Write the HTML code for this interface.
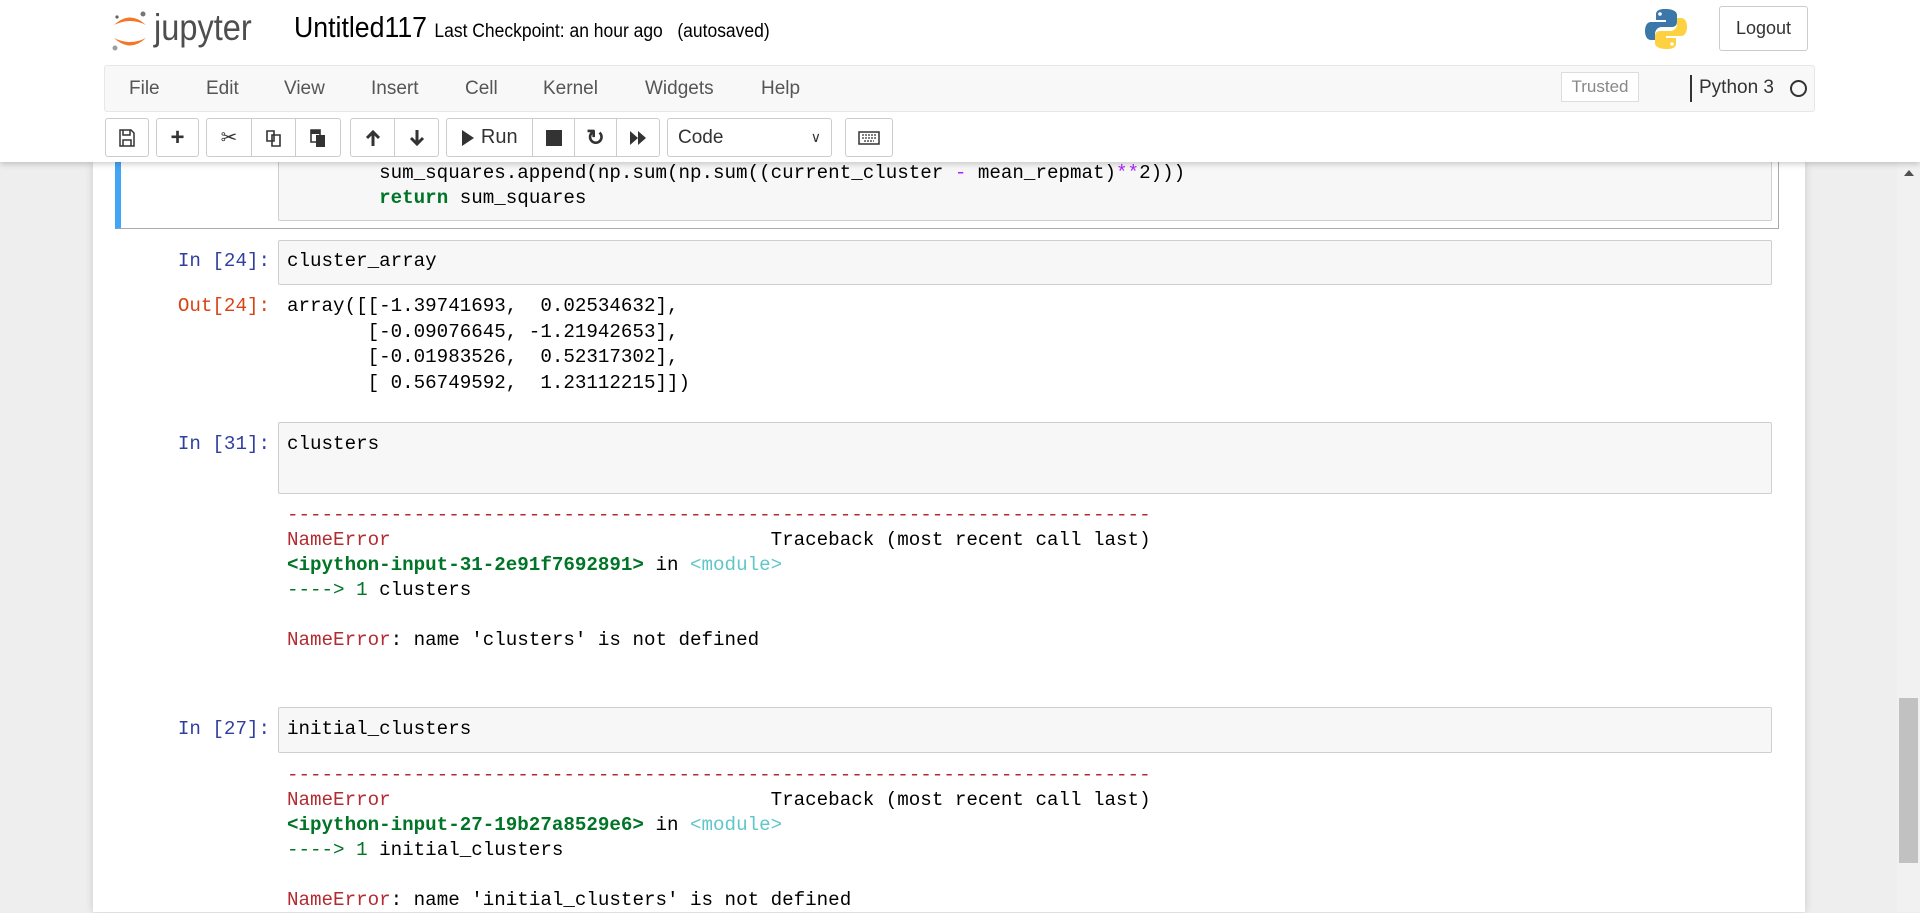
<!DOCTYPE html>
<html><head><meta charset="utf-8"><style>
*{box-sizing:border-box;margin:0;padding:0}
body{width:1920px;height:912px;overflow:hidden;background:#eeeeee;font-family:"Liberation Sans",sans-serif;position:relative}
.abs{position:absolute}
.mono{font-family:"Liberation Mono",monospace;font-size:19.2px;line-height:25px;white-space:pre;color:#000}
#hdr{left:0;top:0;width:1920px;height:162px;background:#fff;box-shadow:0 2px 6px rgba(0,0,0,.2);z-index:5}
.menu{left:104px;top:65px;width:1711px;height:47px;background:#f8f8f8;border:1px solid #e7e7e7;border-radius:3px}
.menu span{position:absolute;top:12px;font-size:19px;color:#555}
.btn{position:absolute;top:118px;height:39px;background:#fff;border:1px solid #ccc;border-radius:3px;display:flex;align-items:center;justify-content:center;color:#333;font-size:18px}
.grp{display:flex;position:absolute;top:118px;height:39px}
.grp div{border:1px solid #ccc;background:#fff;height:39px;display:flex;align-items:center;justify-content:center;margin-left:-1px;color:#333}
.grp div:first-child{border-radius:3px 0 0 3px;margin-left:0}
.grp div:last-child{border-radius:0 3px 3px 0}
.inbox{background:#f7f7f7;border:1px solid #cfcfcf;border-radius:2px}
.pin{color:#303f9f;text-align:right;width:180px}
.pout{color:#d84315;text-align:right;width:180px}
.r{color:#b22b31}.g{color:#007427;font-weight:bold}.c{color:#60c6c8}.gn{color:#007427}
</style></head><body>
<div class="abs" style="left:93px;top:162px;width:1712px;height:750px;background:#fff;box-shadow:0 0 8px rgba(0,0,0,.15)"></div>
<div id="hdr" class="abs">
 <svg class="abs" style="left:110px;top:8px" width="40" height="46" viewBox="0 0 40 46">
  <path d="M4 17 Q20 2 36 17 Q20 9 4 17Z" fill="#f37726"/>
  <path d="M4 30 Q20 45 36 30 Q20 38 4 30Z" fill="#f37726"/>
  <circle cx="33" cy="6" r="2.5" fill="#767677"/><circle cx="5" cy="40" r="2.5" fill="#9e9e9e"/><circle cx="7" cy="9" r="1.6" fill="#616262"/>
 </svg>
 <div class="abs" style="left:154px;top:7px;font-size:37px;color:#4e4e4e;letter-spacing:0;transform:scaleX(0.88);transform-origin:left">jupyter</div>
 <div class="abs" style="left:294px;top:12px;font-size:29px;color:#000;transform:scaleX(0.92);transform-origin:left">Untitled117 <span style="font-size:19px">Last Checkpoint: an hour ago &nbsp;&nbsp;(autosaved)</span></div>
 <svg class="abs" style="left:1645px;top:7px" width="42" height="44" viewBox="0 0 42 44">
  <path d="M20 2c-9 0-9 4-9 6v5h10v2H6c-4 0-6 4-6 9s2 9 6 9h4v-6c0-4 3-7 7-7h10c3 0 5-2 5-5V8c0-3-3-6-12-6z" fill="#3b77a8"/>
  <path d="M22 42c9 0 9-4 9-6v-5H21v-2h15c4 0 6-4 6-9s-2-9-6-9h-4v6c0 4-3 7-7 7H15c-3 0-5 2-5 5v7c0 3 3 6 12 6z" fill="#fed142"/>
  <circle cx="15" cy="7" r="1.8" fill="#fff"/><circle cx="27" cy="37" r="1.8" fill="#fff"/>
 </svg>
 <div class="abs" style="left:1719px;top:6px;width:89px;height:45px;border:1px solid #ccc;border-radius:3px;font-size:18px;color:#333;display:flex;align-items:center;justify-content:center">Logout</div>
 <div class="abs menu">
  <span style="left:24px">File</span><span style="left:101px">Edit</span><span style="left:179px">View</span><span style="left:266px">Insert</span><span style="left:360px">Cell</span><span style="left:438px">Kernel</span><span style="left:540px">Widgets</span><span style="left:656px">Help</span>
  <div class="abs" style="left:1456px;top:6px;width:78px;height:30px;border:1px solid #ddd;background:#fff;color:#888;font-size:17px;display:flex;align-items:center;justify-content:center">Trusted</div>
  <div class="abs" style="left:1585px;top:9px;width:2px;height:27px;background:#333"></div>
  <span style="left:1594px;top:11px;color:#333;font-size:19px">Python 3</span>
  <div class="abs" style="left:1685px;top:14px;width:17px;height:17px;border:2.5px solid #333;border-radius:50%"></div>
 </div>
 <div class="btn" style="left:105px;width:44px">
  <svg width="16" height="18" viewBox="0 0 16 18"><path d="M1 1h11l3 3v13H1z M4 1v5h7V1 M4 11h8v6H4z" fill="none" stroke="#333" stroke-width="1.5"/></svg></div>
 <div class="btn" style="left:156px;width:43px;font-weight:bold;font-size:24px">+</div>
 <div class="grp" style="left:206px"><div style="width:46px;font-size:20px">✂</div><div style="width:45px">
  <svg width="18" height="18" viewBox="0 0 18 18"><path d="M2 2h7v10H2z M7 6h8v11H7z" fill="#fff" stroke="#333" stroke-width="1.6"/></svg></div><div style="width:46px">
  <svg width="18" height="20" viewBox="0 0 18 20"><path d="M2 2h9v4H2z" fill="#333"/><path d="M2 2h9v12H2z" fill="none" stroke="#333" stroke-width="1.6"/><path d="M7 7h9v12H7z" fill="#333"/></svg></div></div>
 <div class="grp" style="left:350px"><div style="width:45px"><svg width="16" height="18" viewBox="0 0 16 18"><path d="M8 17V3M2 9l6-6 6 6" fill="none" stroke="#333" stroke-width="3"/></svg></div><div style="width:45px"><svg width="16" height="18" viewBox="0 0 16 18"><path d="M8 1v14M2 9l6 6 6-6" fill="none" stroke="#333" stroke-width="3"/></svg></div></div>
 <div class="grp" style="left:446px"><div style="width:87px;font-size:20px"><svg width="14" height="18" viewBox="0 0 14 18"><path d="M1 1l12 8-12 8z" fill="#333"/></svg>&nbsp;Run</div><div style="width:43px"><svg width="16" height="16"><rect width="16" height="16" fill="#333"/></svg></div><div style="width:43px;font-size:22px;font-weight:bold">↻</div><div style="width:44px"><svg width="18" height="16" viewBox="0 0 18 16"><path d="M1 1l8 7-8 7z M9 1l8 7-8 7z" fill="#333"/></svg></div></div>
 <div class="btn" style="left:667px;width:165px;justify-content:space-between;padding:0 10px;font-size:19px;border-radius:3px"><span>Code</span><span style="font-size:14px">∨</span></div>
 <div class="btn" style="left:845px;width:48px"><svg width="22" height="14" viewBox="0 0 22 14"><rect x="1" y="1" width="20" height="12" fill="none" stroke="#333" stroke-width="1.5"/><path d="M4 4h14M4 7h14M6 10h10" stroke="#333" stroke-width="1.3" stroke-dasharray="2 1"/></svg></div>
</div>
<!-- first cell -->
<div class="abs" style="left:115px;top:140px;width:1664px;height:89px;border:1px solid #ababab;border-left:6px solid #42a5f5;background:#fff"></div>
<div class="abs inbox" style="left:278px;top:140px;width:1494px;height:81px"></div>
<div class="abs mono" style="left:287px;top:161px">        sum_squares.append(np.sum(np.sum((current_cluster <span style="color:#aa22ff">-</span> mean_repmat)<span style="color:#aa22ff">**</span>2)))
        <span class="g">return</span> sum_squares</div>
<!-- In 24 -->
<div class="abs mono pin" style="left:90px;top:249px">In [24]:</div>
<div class="abs inbox" style="left:278px;top:240px;width:1494px;height:45px"></div>
<div class="abs mono" style="left:287px;top:249px">cluster_array</div>
<div class="abs mono pout" style="left:90px;top:294px">Out[24]:</div>
<div class="abs mono" style="left:287px;top:294px;line-height:25.6px">array([[-1.39741693,  0.02534632],
       [-0.09076645, -1.21942653],
       [-0.01983526,  0.52317302],
       [ 0.56749592,  1.23112215]])</div>
<!-- In 31 -->
<div class="abs mono pin" style="left:90px;top:432px">In [31]:</div>
<div class="abs inbox" style="left:278px;top:422px;width:1494px;height:72px"></div>
<div class="abs mono" style="left:287px;top:432px">clusters</div>
<div class="abs mono" style="left:287px;top:503px"><span class="r">---------------------------------------------------------------------------</span>
<span class="r">NameError</span>                                 Traceback (most recent call last)
<span class="g">&lt;ipython-input-31-2e91f7692891&gt;</span> in <span class="c">&lt;module&gt;</span>
<span class="gn">----&gt; 1</span> clusters

<span class="r">NameError</span>: name 'clusters' is not defined</div>
<!-- In 27 -->
<div class="abs mono pin" style="left:90px;top:717px">In [27]:</div>
<div class="abs inbox" style="left:278px;top:707px;width:1494px;height:46px"></div>
<div class="abs mono" style="left:287px;top:717px">initial_clusters</div>
<div class="abs mono" style="left:287px;top:763px"><span class="r">---------------------------------------------------------------------------</span>
<span class="r">NameError</span>                                 Traceback (most recent call last)
<span class="g">&lt;ipython-input-27-19b27a8529e6&gt;</span> in <span class="c">&lt;module&gt;</span>
<span class="gn">----&gt; 1</span> initial_clusters

<span class="r">NameError</span>: name 'initial_clusters' is not defined</div>
<!-- scrollbar -->
<div class="abs" style="left:1897px;top:162px;width:23px;height:750px;background:#f1f1f1"></div>
<div class="abs" style="left:1904px;top:170px;width:0;height:0;border-left:5px solid transparent;border-right:5px solid transparent;border-bottom:6px solid #505050"></div>
<div class="abs" style="left:1899px;top:698px;width:19px;height:165px;background:#c1c1c1"></div>
</body></html>
